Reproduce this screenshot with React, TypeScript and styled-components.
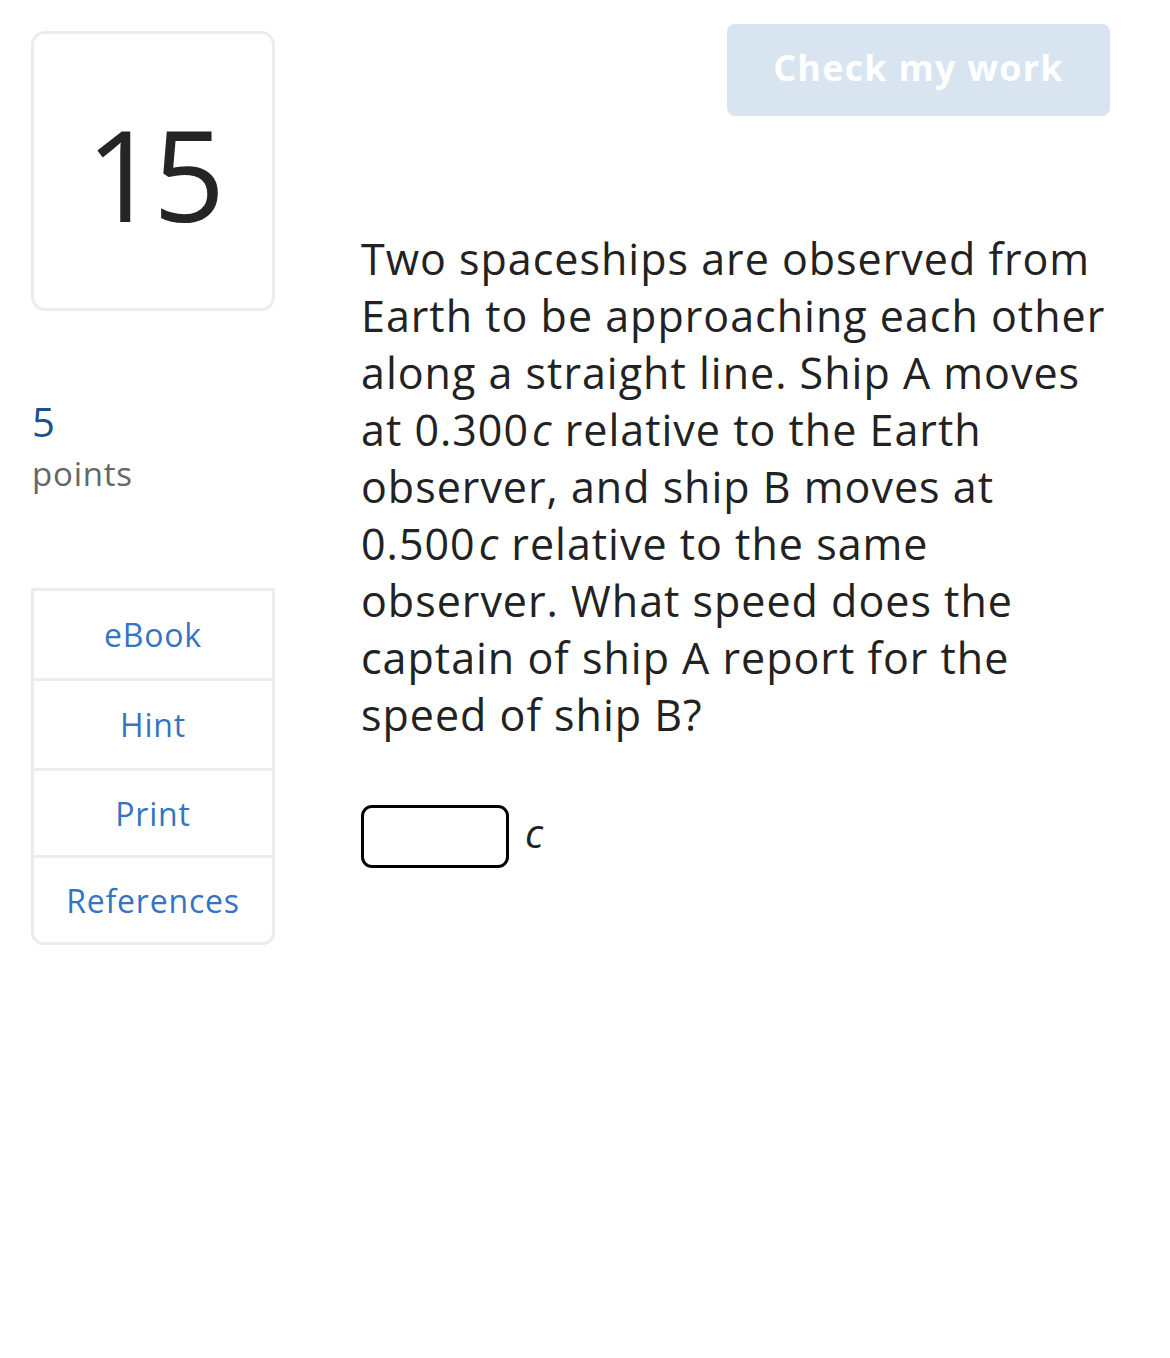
import styled, { createGlobalStyle } from "styled-components";

const GlobalStyle = createGlobalStyle`
  html, body {
    margin: 0;
    padding: 0;
    background: #fff;
  }
  body {
    font-family: "Open Sans", Lato, sans-serif;
    color: #222;
  }
`;

const Page = styled.div`
  display: grid;
  grid-template-columns: 244px 1fr;
  column-gap: 86px;
  padding: 24px 60px 0 31px;
  min-height: 1358px;
  box-sizing: border-box;
`;

const Side = styled.aside`
  display: flex;
  flex-direction: column;
  padding-top: 7px;
`;

const NumberCard = styled.div`
  height: 280px;
  border: 3px solid #ececec;
  border-radius: 14px;
  box-sizing: border-box;
  display: flex;
  align-items: center;
  justify-content: center;
  font-size: 126px;
  font-weight: 400;
  color: #252525;
  letter-spacing: -5px;
  padding-top: 4px;
`;

const Points = styled.div`
  margin-top: 84px;
  display: flex;
  flex-direction: column;
  padding-left: 1px;
`;

const PointValue = styled.span`
  font-size: 40px;
  line-height: 54px;
  color: #1c4f8c;
`;

const PointLabel = styled.span`
  font-size: 33px;
  line-height: 50px;
  letter-spacing: 0.8px;
  color: #666;
`;

const Tools = styled.nav`
  margin-top: 89px;
  border: 3px solid #ececec;
  border-radius: 0 0 12px 12px;
  display: flex;
  flex-direction: column;
`;

const ToolLink = styled.a<{ $h: number }>`
  height: ${(p) => p.$h}px;
  display: flex;
  align-items: center;
  justify-content: center;
  font-size: 32px;
  letter-spacing: 0.8px;
  color: #3574bf;
  text-decoration: none;
  border-bottom: 3px solid #ececec;
  &:last-child {
    border-bottom: 0;
  }
`;

const Main = styled.main`
  display: flex;
  flex-direction: column;
`;

const TopBar = styled.div`
  display: flex;
  justify-content: flex-end;
`;

const CheckButton = styled.button`
  width: 383px;
  height: 92px;
  border: 0;
  border-radius: 8px;
  background: #d9e4f1;
  color: #fff;
  font-family: "Open Sans", sans-serif;
  font-size: 36px;
  font-weight: 700;
  letter-spacing: 1.2px;
  padding-bottom: 6px;
`;

const Question = styled.p`
  margin: 114px 0 0;
  font-size: 43px;
  line-height: 57px;
  letter-spacing: 1px;
  color: #222;
  max-width: 752px;
`;

const Var = styled.i`
  margin-left: 3px;
`;

const Answer = styled.div`
  margin-top: 62px;
  display: flex;
  align-items: center;
  gap: 16px;
`;

const AnswerInput = styled.input`
  width: 148px;
  height: 63px;
  box-sizing: border-box;
  border: 3px solid #000;
  border-radius: 11px;
  background: #fff;
`;

const Unit = styled.i`
  font-size: 40px;
  color: #222;
  margin-top: -8px;
`;

export default function App() {
  return (
    <>
      <GlobalStyle />
      <Page>
        <Side>
          <NumberCard>15</NumberCard>
          <Points>
            <PointValue>5</PointValue>
            <PointLabel>points</PointLabel>
          </Points>
          <Tools>
            <ToolLink $h={87} href="#">eBook</ToolLink>
            <ToolLink $h={87} href="#">Hint</ToolLink>
            <ToolLink $h={84} href="#">Print</ToolLink>
            <ToolLink $h={84} href="#">References</ToolLink>
          </Tools>
        </Side>
        <Main>
          <TopBar>
            <CheckButton>Check my work</CheckButton>
          </TopBar>
          <Question>
            Two spaceships are observed from Earth to be approaching each other
            along a straight line. Ship A moves at 0.300<Var>c</Var> relative to
            the Earth observer, and ship B moves at 0.500<Var>c</Var> relative to
            the same observer. What speed does the captain of ship A report for
            the speed of ship B?
          </Question>
          <Answer>
            <AnswerInput type="text" />
            <Unit>c</Unit>
          </Answer>
        </Main>
      </Page>
    </>
  );
}
